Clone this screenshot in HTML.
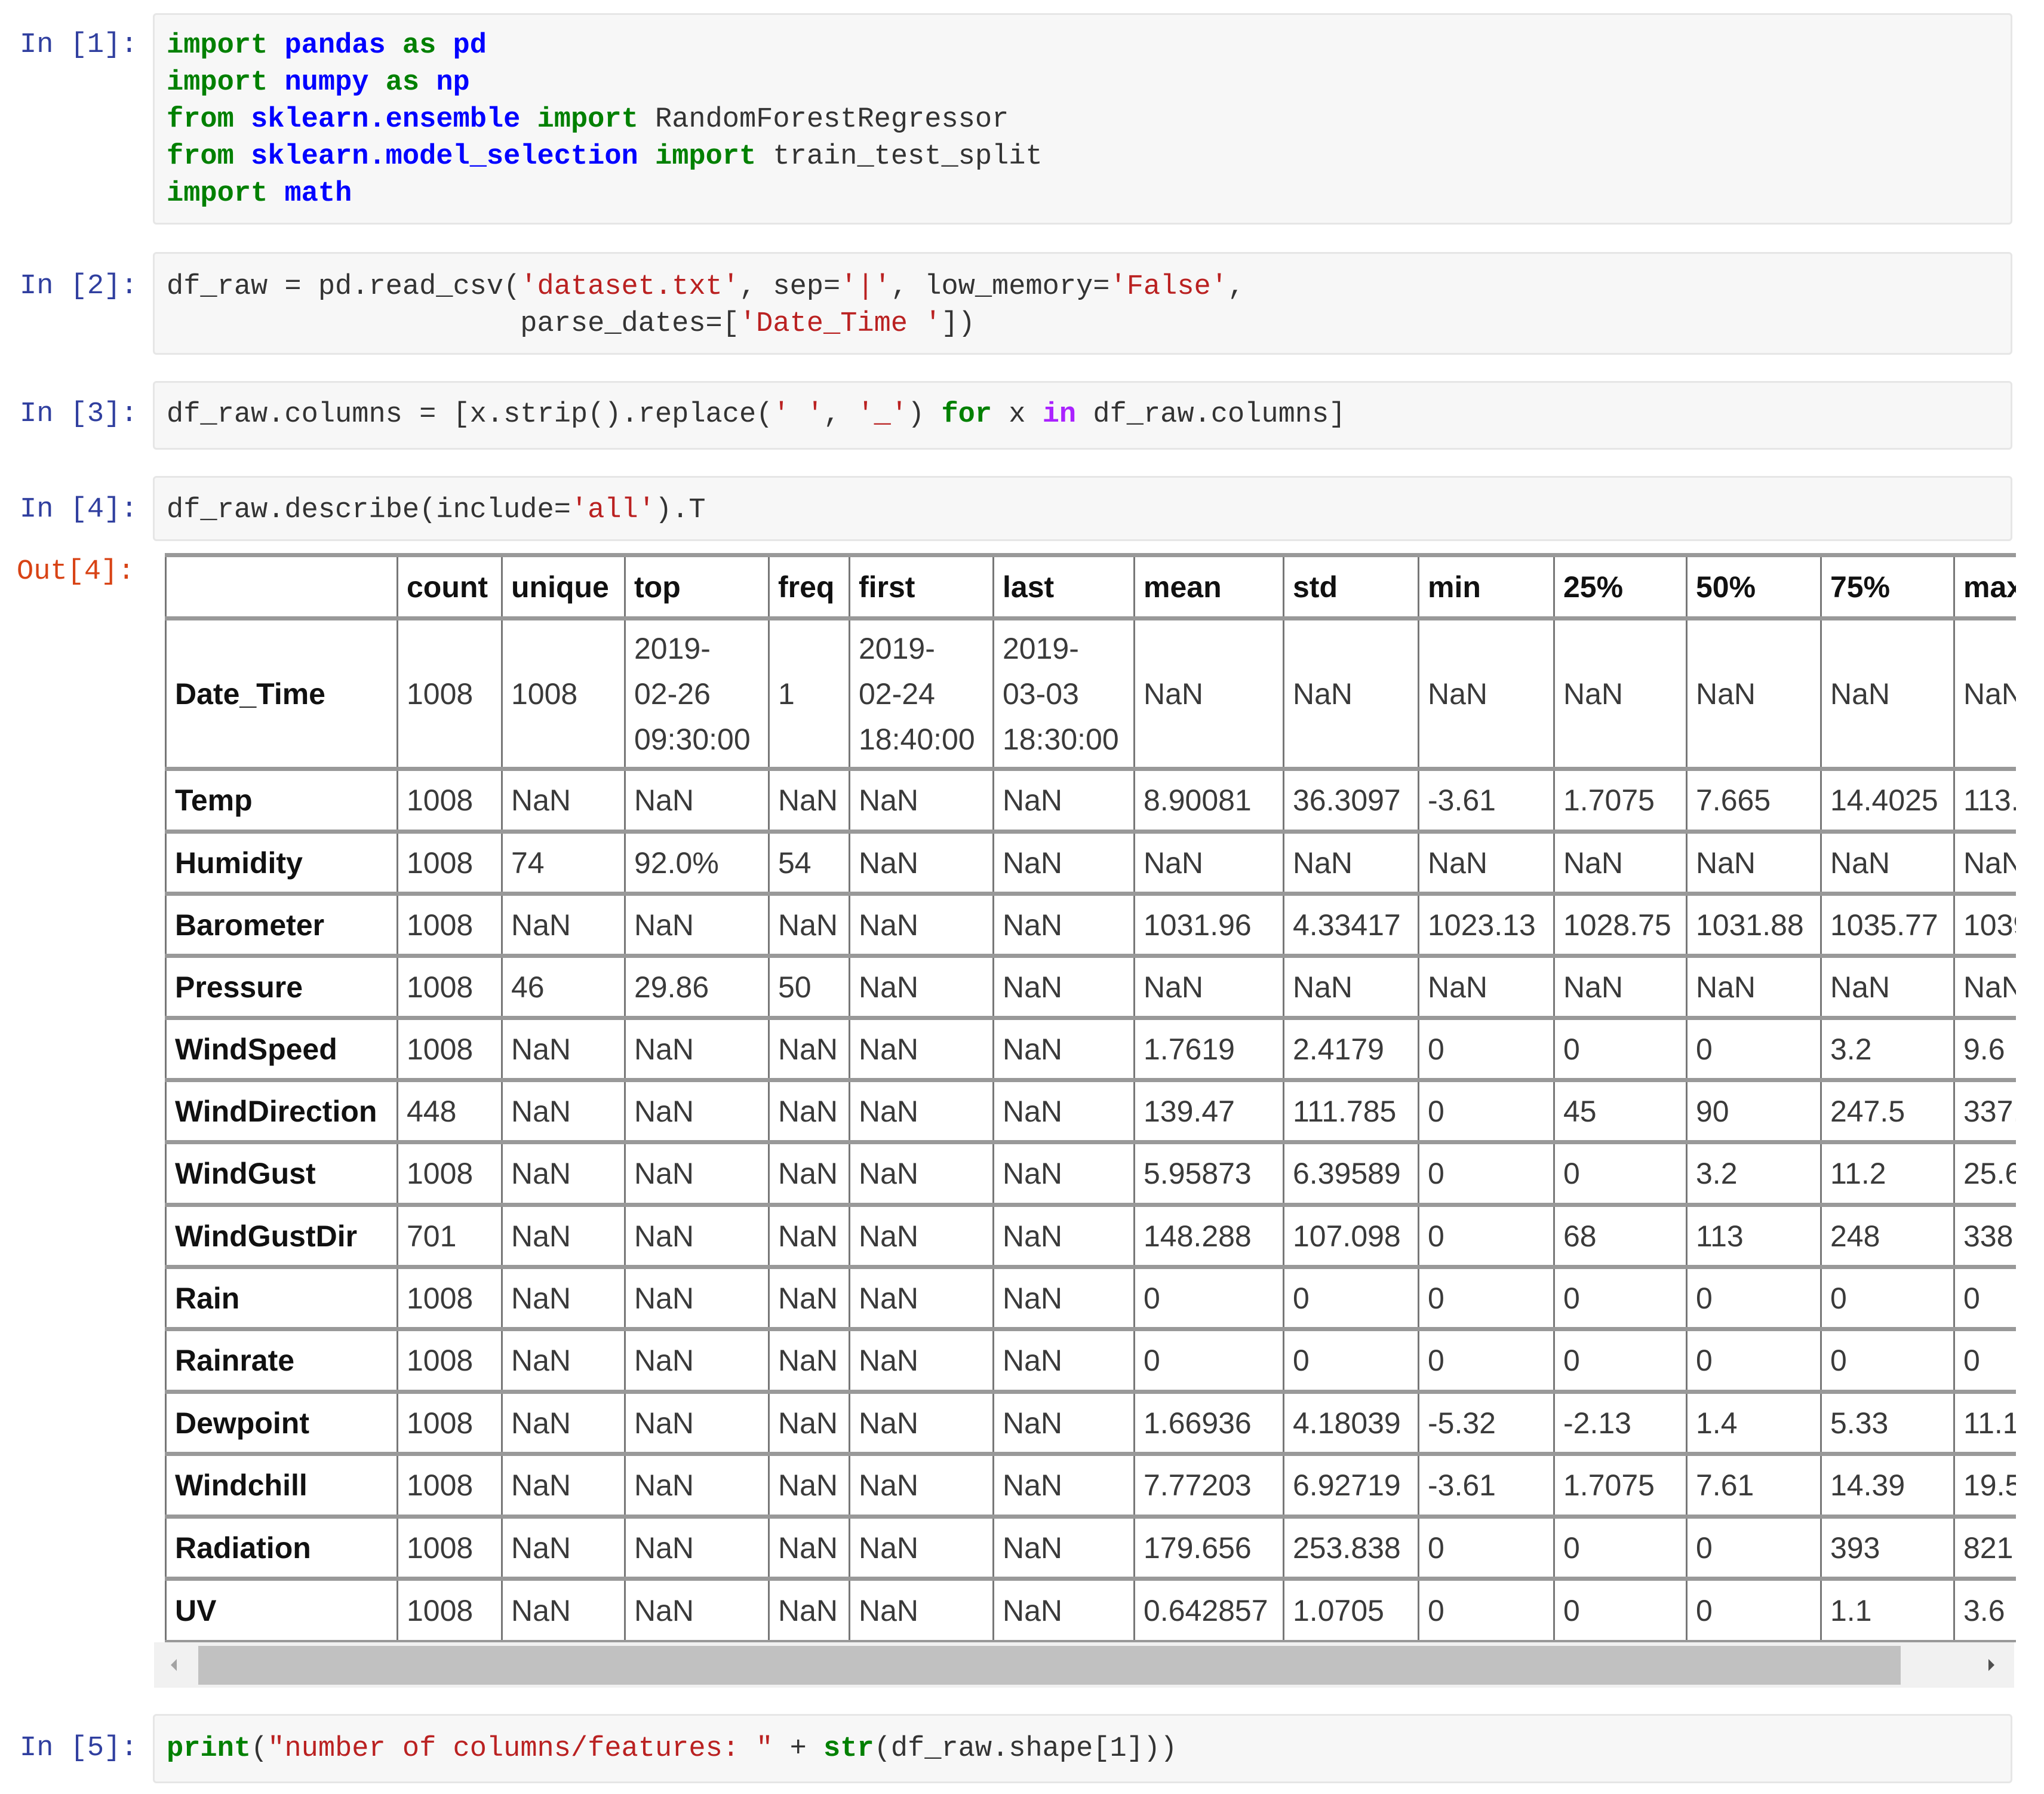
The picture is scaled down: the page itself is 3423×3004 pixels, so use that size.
<!DOCTYPE html>
<html><head><meta charset="utf-8"><style>
body{margin:0;width:3423px;height:3004px;background:#fff;position:relative;overflow:hidden;font-family:"Liberation Sans",sans-serif}
.p{position:absolute;left:33px;font-family:"Liberation Mono",monospace;font-size:47px;color:#303F9F;white-space:pre}
.o{color:#D84315}
.box{position:absolute;left:256px;width:3114px;background:#f7f7f7;border:3px solid #e6e6e6;border-radius:6px;box-sizing:border-box}
.code{position:absolute;left:279px;font-family:"Liberation Mono",monospace;font-size:47px;line-height:62px;color:#333;white-space:pre}
.k{color:#008000;font-weight:bold}.n{color:#0000FF;font-weight:bold}.s{color:#BA2121}.i{color:#AA22FF;font-weight:bold}
.wrap{position:absolute;left:276px;top:926px;width:3100px;height:1824px;overflow:hidden}
table{border-collapse:collapse;table-layout:fixed;width:3198px;font-size:50px;color:#3a3a3a}
td,th{border-left:3px solid #777;border-right:3px solid #777;border-top:7px solid #999;border-bottom:7px solid #999;padding:0 0 0 14px;text-align:left;vertical-align:middle;white-space:nowrap;overflow:hidden}
th{font-weight:bold;color:#111}
td{line-height:76px}
</style></head><body>
<div class="box" style="top:22px;height:354px"></div>
<div class="p" style="top:49px">In [1]:</div>
<div class="code" style="top:46px"><span class="k">import</span> <span class="n">pandas</span> <span class="k">as</span> <span class="n">pd</span>
<span class="k">import</span> <span class="n">numpy</span> <span class="k">as</span> <span class="n">np</span>
<span class="k">from</span> <span class="n">sklearn.ensemble</span> <span class="k">import</span> RandomForestRegressor
<span class="k">from</span> <span class="n">sklearn.model_selection</span> <span class="k">import</span> train_test_split
<span class="k">import</span> <span class="n">math</span></div>

<div class="box" style="top:422px;height:172px"></div>
<div class="p" style="top:453px">In [2]:</div>
<div class="code" style="top:450px">df_raw = pd.read_csv(<span class="s">'dataset.txt'</span>, sep=<span class="s">'|'</span>, low_memory=<span class="s">'False'</span>,
                     parse_dates=[<span class="s">'Date_Time '</span>])</div>

<div class="box" style="top:638px;height:115px"></div>
<div class="p" style="top:667px">In [3]:</div>
<div class="code" style="top:664px">df_raw.columns = [x.strip().replace(<span class="s">' '</span>, <span class="s">'_'</span>) <span class="k">for</span> x <span class="i">in</span> df_raw.columns]</div>

<div class="box" style="top:797px;height:109px"></div>
<div class="p" style="top:827px">In [4]:</div>
<div class="code" style="top:824px">df_raw.describe(include=<span class="s">'all'</span>).T</div>

<div class="p o" style="top:931px;left:28px">Out[4]:</div>

<div class="wrap">
<table>
<colgroup><col style="width:388px"><col style="width:175px"><col style="width:206px"><col style="width:241px"><col style="width:135px"><col style="width:241px"><col style="width:236px"><col style="width:250px"><col style="width:226px"><col style="width:227px"><col style="width:222px"><col style="width:225px"><col style="width:223px"><col style="width:223px"></colgroup>
<tr style="height:106px"><th></th><th>count</th><th>unique</th><th>top</th><th>freq</th><th>first</th><th>last</th><th>mean</th><th>std</th><th>min</th><th>25%</th><th>50%</th><th>75%</th><th>max</th></tr>
<tr style="height:252px"><th>Date_Time</th><td>1008</td><td>1008</td><td>2019-<br>02-26<br>09:30:00</td><td>1</td><td>2019-<br>02-24<br>18:40:00</td><td>2019-<br>03-03<br>18:30:00</td><td>NaN</td><td>NaN</td><td>NaN</td><td>NaN</td><td>NaN</td><td>NaN</td><td>NaN</td></tr>
<tr style="height:105px"><th>Temp</th><td>1008</td><td>NaN</td><td>NaN</td><td>NaN</td><td>NaN</td><td>NaN</td><td>8.90081</td><td>36.3097</td><td>-3.61</td><td>1.7075</td><td>7.665</td><td>14.4025</td><td>113.9</td></tr>
<tr style="height:104px"><th>Humidity</th><td>1008</td><td>74</td><td>92.0%</td><td>54</td><td>NaN</td><td>NaN</td><td>NaN</td><td>NaN</td><td>NaN</td><td>NaN</td><td>NaN</td><td>NaN</td><td>NaN</td></tr>
<tr style="height:104px"><th>Barometer</th><td>1008</td><td>NaN</td><td>NaN</td><td>NaN</td><td>NaN</td><td>NaN</td><td>1031.96</td><td>4.33417</td><td>1023.13</td><td>1028.75</td><td>1031.88</td><td>1035.77</td><td>1039.7</td></tr>
<tr style="height:104px"><th>Pressure</th><td>1008</td><td>46</td><td>29.86</td><td>50</td><td>NaN</td><td>NaN</td><td>NaN</td><td>NaN</td><td>NaN</td><td>NaN</td><td>NaN</td><td>NaN</td><td>NaN</td></tr>
<tr style="height:104px"><th>WindSpeed</th><td>1008</td><td>NaN</td><td>NaN</td><td>NaN</td><td>NaN</td><td>NaN</td><td>1.7619</td><td>2.4179</td><td>0</td><td>0</td><td>0</td><td>3.2</td><td>9.6</td></tr>
<tr style="height:104px"><th>WindDirection</th><td>448</td><td>NaN</td><td>NaN</td><td>NaN</td><td>NaN</td><td>NaN</td><td>139.47</td><td>111.785</td><td>0</td><td>45</td><td>90</td><td>247.5</td><td>337.5</td></tr>
<tr style="height:105px"><th>WindGust</th><td>1008</td><td>NaN</td><td>NaN</td><td>NaN</td><td>NaN</td><td>NaN</td><td>5.95873</td><td>6.39589</td><td>0</td><td>0</td><td>3.2</td><td>11.2</td><td>25.6</td></tr>
<tr style="height:104px"><th>WindGustDir</th><td>701</td><td>NaN</td><td>NaN</td><td>NaN</td><td>NaN</td><td>NaN</td><td>148.288</td><td>107.098</td><td>0</td><td>68</td><td>113</td><td>248</td><td>338</td></tr>
<tr style="height:104px"><th>Rain</th><td>1008</td><td>NaN</td><td>NaN</td><td>NaN</td><td>NaN</td><td>NaN</td><td>0</td><td>0</td><td>0</td><td>0</td><td>0</td><td>0</td><td>0</td></tr>
<tr style="height:105px"><th>Rainrate</th><td>1008</td><td>NaN</td><td>NaN</td><td>NaN</td><td>NaN</td><td>NaN</td><td>0</td><td>0</td><td>0</td><td>0</td><td>0</td><td>0</td><td>0</td></tr>
<tr style="height:104px"><th>Dewpoint</th><td>1008</td><td>NaN</td><td>NaN</td><td>NaN</td><td>NaN</td><td>NaN</td><td>1.66936</td><td>4.18039</td><td>-5.32</td><td>-2.13</td><td>1.4</td><td>5.33</td><td>11.1</td></tr>
<tr style="height:105px"><th>Windchill</th><td>1008</td><td>NaN</td><td>NaN</td><td>NaN</td><td>NaN</td><td>NaN</td><td>7.77203</td><td>6.92719</td><td>-3.61</td><td>1.7075</td><td>7.61</td><td>14.39</td><td>19.5</td></tr>
<tr style="height:104px"><th>Radiation</th><td>1008</td><td>NaN</td><td>NaN</td><td>NaN</td><td>NaN</td><td>NaN</td><td>179.656</td><td>253.838</td><td>0</td><td>0</td><td>0</td><td>393</td><td>821</td></tr>
<tr style="height:106px"><th>UV</th><td>1008</td><td>NaN</td><td>NaN</td><td>NaN</td><td>NaN</td><td>NaN</td><td>0.642857</td><td>1.0705</td><td>0</td><td>0</td><td>0</td><td>1.1</td><td>3.6</td></tr>
</table>
</div>

<div style="position:absolute;left:258px;top:2750px;width:3115px;height:76px;background:#f1f1f1"></div>
<div style="position:absolute;left:332px;top:2756px;width:2851px;height:65px;background:#c1c1c1"></div>
<div style="position:absolute;left:286px;top:2778px;width:0;height:0;border-top:10px solid transparent;border-bottom:10px solid transparent;border-right:10px solid #a3a3a3"></div>
<div style="position:absolute;left:3330px;top:2778px;width:0;height:0;border-top:10px solid transparent;border-bottom:10px solid transparent;border-left:10px solid #505050"></div>

<div class="box" style="top:2870px;height:116px"></div>
<div class="p" style="top:2901px">In [5]:</div>
<div class="code" style="top:2898px"><span class="k">print</span>(<span class="s">"number of columns/features: "</span> + <span class="k">str</span>(df_raw.shape[1]))</div>
</body></html>
